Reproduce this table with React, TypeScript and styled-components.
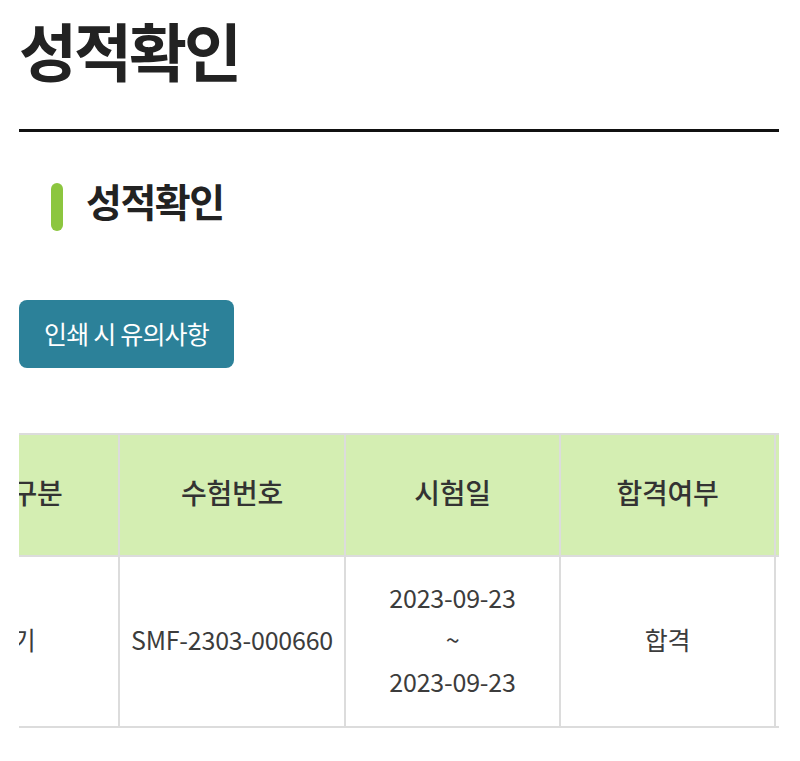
import React, { useLayoutEffect, useRef } from 'react';
import styled, { createGlobalStyle } from 'styled-components';

const Global = createGlobalStyle`
  html, body { margin: 0; padding: 0; background: #fff; }
  body {
    font-family: "Noto Sans CJK KR", "Noto Sans", sans-serif;
    color: #222;
  }
`;

const Page = styled.main`
  padding: 0 21px 40px 19px;
`;

const PageHeader = styled.header`
  padding: 17px 0 49px;
  border-bottom: 3px solid #111;
`;

const Title = styled.h1`
  margin: 0;
  font-size: 63px;
  line-height: 1;
  font-weight: 700;
  letter-spacing: -3px;
  color: #222;
`;

const SectionHead = styled.div`
  display: flex;
  align-items: flex-start;
  gap: 23px;
  margin-top: 51px;
  padding-left: 32px;
`;

const Bar = styled.span`
  flex: none;
  width: 12px;
  height: 48px;
  border-radius: 6px;
  background: #8cc63f;
`;

const SubTitle = styled.h2`
  margin: -2px 0 0;
  font-size: 39px;
  line-height: 1;
  font-weight: 700;
  letter-spacing: -1.5px;
  color: #222;
`;

const NoticeButton = styled.button`
  display: block;
  margin-top: 69px;
  width: 215px;
  height: 68px;
  padding: 0 0 3px;
  border: 0;
  border-radius: 8px;
  background: #2c8199;
  color: #fff;
  font-family: inherit;
  font-size: 25px;
  font-weight: 400;
  letter-spacing: -0.8px;
  cursor: pointer;
`;

const TableScroll = styled.div`
  margin-top: 65px;
  overflow-x: auto;
  scrollbar-width: none;
  &::-webkit-scrollbar { display: none; }
`;

const Table = styled.table`
  border-collapse: collapse;
  table-layout: fixed;
  width: 1020px;
`;

const HeadCell = styled.th`
  height: 114px;
  padding: 0 0 6px;
  background: #d4eeb2;
  border: 2px solid #dcdcdc;
  font-size: 28px;
  font-weight: 500;
  color: #333;
  text-align: center;
  letter-spacing: -0.3px;
`;

const BodyCell = styled.td<{ $align?: 'left' | 'center'; $inset?: number }>`
  height: 163px;
  padding: 0 0 6px ${(p) => p.$inset ?? 0}px;
  border: 2px solid #dcdcdc;
  font-size: 25px;
  font-weight: 400;
  line-height: 42px;
  color: #3c3c3c;
  text-align: ${(p) => p.$align ?? 'center'};
  vertical-align: middle;
  letter-spacing: -0.2px;
`;

const columns = [164, 226, 215, 215, 200];

export default function App() {
  const scrollRef = useRef<HTMLDivElement>(null);
  useLayoutEffect(() => {
    if (scrollRef.current) scrollRef.current.scrollLeft = 65;
  }, []);

  return (
    <Page>
      <Global />
      <PageHeader>
        <Title>성적확인</Title>
      </PageHeader>
      <SectionHead>
        <Bar />
        <SubTitle>성적확인</SubTitle>
      </SectionHead>
      <NoticeButton type="button">인쇄 시 유의사항</NoticeButton>
      <TableScroll ref={scrollRef}>
        <Table>
          <colgroup>
            {columns.map((w, i) => (
              <col key={i} style={{ width: w }} />
            ))}
          </colgroup>
          <thead>
            <tr>
              <HeadCell>구분</HeadCell>
              <HeadCell>수험번호</HeadCell>
              <HeadCell>시험일</HeadCell>
              <HeadCell>합격여부</HeadCell>
              <HeadCell>성적표</HeadCell>
            </tr>
          </thead>
          <tbody>
            <tr>
              <BodyCell $align="left" $inset={34}>필기</BodyCell>
              <BodyCell>SMF-2303-000660</BodyCell>
              <BodyCell>
                2023-09-23
                <br />~<br />
                2023-09-23
              </BodyCell>
              <BodyCell>합격</BodyCell>
              <BodyCell>출력</BodyCell>
            </tr>
          </tbody>
        </Table>
      </TableScroll>
    </Page>
  );
}
